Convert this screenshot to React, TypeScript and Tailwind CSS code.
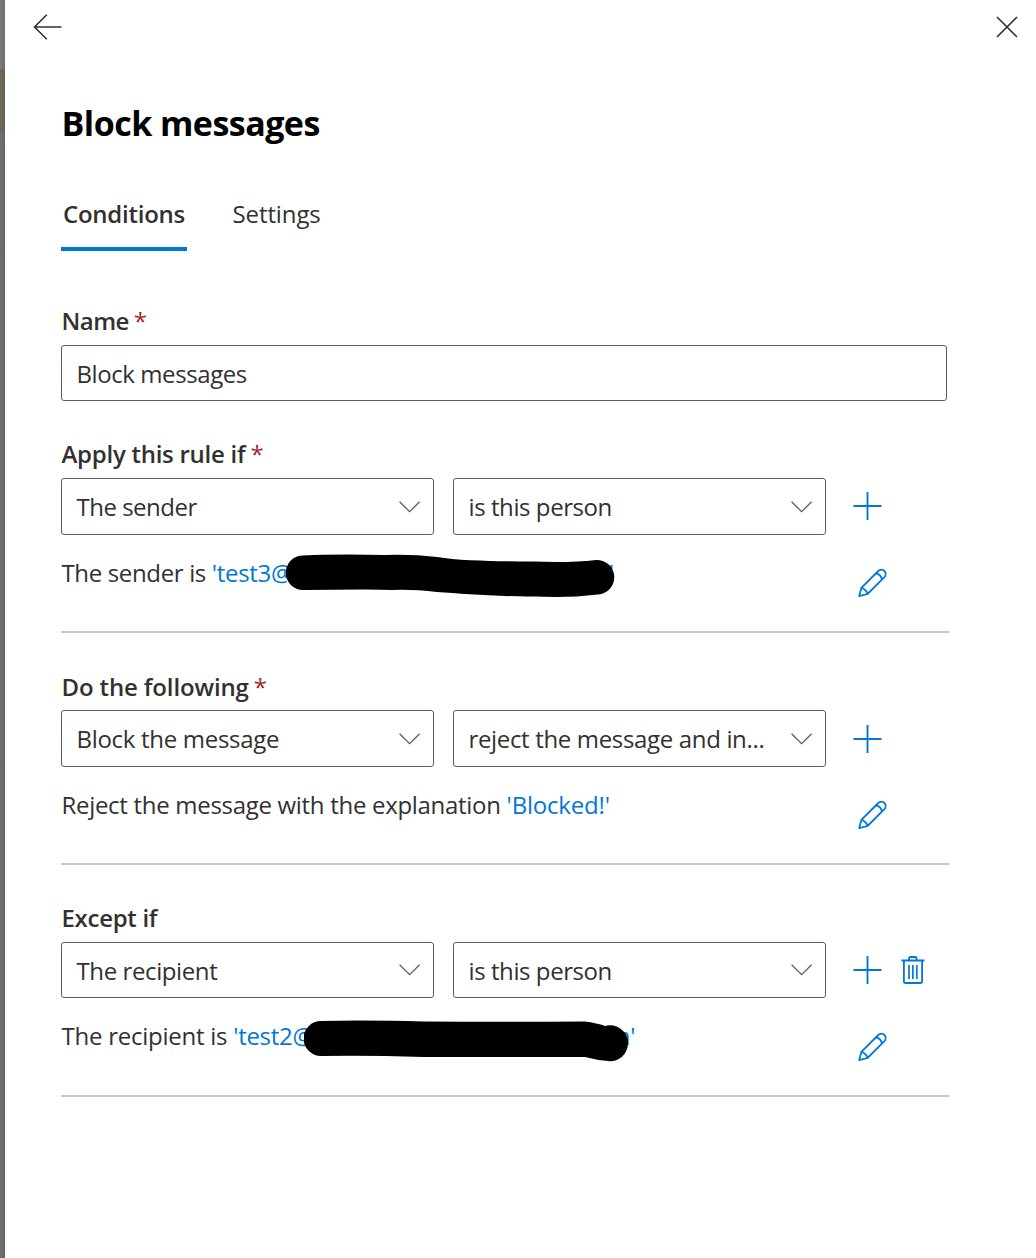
import type { ReactNode } from 'react'

interface SelectProps {
  label: string
  className: string
}

interface RuleSectionProps {
  title: string
  titleClass: string
  required?: boolean
  subject: SelectProps
  predicate: SelectProps
  removable?: boolean
  rowClass?: string
  iconsClass?: string
  summaryClass?: string
  children: ReactNode
}

function BackIcon() {
  return (
    <svg width="30" height="28" viewBox="0 0 30 28" fill="none" stroke="#323130" strokeWidth="1.6">
      <path d="M28.5 14H1.5M13.8 1.8L1.5 14L13.8 26.2" />
    </svg>
  )
}

function CloseIcon() {
  return (
    <svg width="22" height="22" viewBox="0 0 22 22" fill="none" stroke="#323130" strokeWidth="1.7">
      <path d="M1 1L21 21M21 1L1 21" />
    </svg>
  )
}

function ChevronIcon() {
  return (
    <svg className="shrink-0" width="22" height="12" viewBox="0 0 22 12" fill="none" stroke="#605e5c" strokeWidth="1.3">
      <path d="M0.6 0.8L10.6 10.6L20.6 0.8" />
    </svg>
  )
}

function PlusIcon() {
  return (
    <svg width="29" height="28" viewBox="0 0 29 28" fill="none" stroke="#0078d4" strokeWidth="1.9">
      <path d="M0.5 14H28.5M14.5 0V28" />
    </svg>
  )
}

function TrashIcon() {
  return (
    <svg width="24" height="28" viewBox="0 0 24 28" fill="none" stroke="#0078d4" strokeWidth="1.8">
      <path d="M0.5 4.5H23.5M8 4.5V2.4Q8 1 9.4 1H14.2Q15.6 1 15.6 2.4V4.5" />
      <path d="M2.9 4.5V25.2Q2.9 27 4.7 27H19.3Q21.1 27 21.1 25.2V4.5" />
      <path d="M8 9V23M11.9 9V23M15.8 9V23" strokeWidth="1.7" />
    </svg>
  )
}

function PencilIcon() {
  return (
    <svg width="30" height="30" viewBox="0 0 30 30" fill="none" stroke="#0078d4" strokeWidth="1.8" strokeLinejoin="round">
      <path d="M2.2 28.1L4.4 19.9L21.3 3A4.15 4.15 0 0 1 27.4 9.1L10.5 26Z" />
      <path d="M18.9 5.4C21.8 6 24.4 8.6 25 11.5M4.4 19.9C7.4 20.8 9.6 23 10.5 26" />
    </svg>
  )
}

function Select({ label, className }: SelectProps) {
  return (
    <div className="flex w-[373px] items-center justify-between rounded-[3px] border border-[#605e5c] pr-3 pl-[14.5px]">
      <span className={`whitespace-nowrap ${className}`}>{label}</span>
      <ChevronIcon />
    </div>
  )
}

function Required() {
  return <span className="-ml-px font-normal text-[#a4262c]">*</span>
}

function RuleSection({
  title,
  titleClass,
  required,
  subject,
  predicate,
  removable,
  rowClass = 'h-[57px]',
  iconsClass = '',
  summaryClass = 'h-24',
  children,
}: RuleSectionProps) {
  return (
    <section className="mt-[37px] w-[888px] border-b-2 border-[#c8c8c8]">
      <h2 className={`h-10 pl-[0.5px] leading-8 font-semibold ${titleClass}`}>
        {title} {required && <Required />}
      </h2>
      <div className={`flex ${rowClass}`}>
        <Select {...subject} />
        <div className="ml-[19px] flex">
          <Select {...predicate} />
        </div>
        <div className={`ml-[27px] flex items-center gap-[19px] ${iconsClass}`}>
          <PlusIcon />
          {removable && <TrashIcon />}
        </div>
      </div>
      <div className={`flex justify-between pr-[62px] pl-[0.5px] ${summaryClass}`}>
        <p className="mt-[22px] h-8 leading-8 whitespace-nowrap">{children}</p>
        <div className="mt-[33px]">
          <PencilIcon />
        </div>
      </div>
    </section>
  )
}

export default function App() {
  return (
    <div className="flex h-[1258px] w-[1036px] overflow-hidden bg-white font-['Open_Sans','Noto_Sans',sans-serif] text-[24px] text-[#323130]">
      {/* Dimmed page behind the panel */}
      <div className="flex w-[5px] flex-col">
        <div className="h-[69px] bg-linear-to-r from-[#7c7c7c] to-[#6c6c6c]" />
        <div className="h-[63px] bg-linear-to-r from-[#716b58] to-[#65614e]" />
        <div className="flex-1 bg-linear-to-r from-[#707070] to-[#646464]" />
      </div>

      <main className="flex-1 pl-14">
        <header className="-ml-7 flex h-[54px] items-center justify-between pr-[18px]">
          <BackIcon />
          <CloseIcon />
        </header>

        <h1 className="mt-[45px] h-12 pl-[0.5px] text-[34px] leading-[48px] font-bold tracking-[-0.53px] text-black">Block messages</h1>

        <nav className="mt-[34px] flex h-[70px]">
          <div className="w-[126px] border-b-4 border-[#0078d4] pt-[17px] pl-[2px] leading-8 font-semibold tracking-[-0.25px]">
            Conditions
          </div>
          <div className="ml-[45.5px] pt-[17px] leading-8 tracking-[-0.1px]">Settings</div>
        </nav>

        <div className="mt-[54px]">
          <label className="block h-10 pl-[0.5px] leading-8 font-semibold tracking-[-0.5px]">
            Name <Required />
          </label>
          <div className="flex h-14 w-[886px] items-center rounded-[3px] border border-[#605e5c] pt-0.5 pl-[14.5px] tracking-[-0.42px]">
            Block messages
          </div>
        </div>

        <RuleSection
          title="Apply this rule if"
          titleClass="tracking-[-0.26px]"
          required
          subject={{ label: 'The sender', className: 'tracking-[-0.5px]' }}
          predicate={{ label: 'is this person', className: 'tracking-[-0.42px]' }}
          iconsClass="pb-0.5"
        >
          <span className="tracking-[-0.35px]">The sender is </span>
          <span className="relative inline-block w-[402px] tracking-[-0.3px] text-[#0078d4]">
            'test3@
            <span className="absolute right-0">'</span>
            {/* Redacted domain */}
            <svg className="absolute top-[-3px] left-[74.5px]" width="330" height="46" viewBox="0 0 330 46">
              <path d="M17 1.5Q50 0 98 1Q126 0 151 3C180 8 230 7 270 8Q292 8 310 6A17 17 0 0 1 312 40.500Q290 43 270 43C220 43 180 40 151 38Q126 35 106 36Q90 35 17 36A17 17 0 0 1 17 1.500Z" />
            </svg>
          </span>
        </RuleSection>

        <RuleSection
          title="Do the following"
          titleClass="pt-px tracking-[-0.14px]"
          required
          subject={{ label: 'Block the message', className: 'tracking-[-0.3px]' }}
          predicate={{ label: 'reject the message and in...', className: 'tracking-[-0.34px]' }}
        >
          <span className="tracking-[-0.3px]">Reject the message with the explanation </span>
          <span className="tracking-[-0.2px] text-[#0078d4]">'Blocked!'</span>
        </RuleSection>

        <RuleSection
          title="Except if"
          titleClass="tracking-[-0.3px]"
          subject={{ label: 'The recipient', className: 'pt-0.5 tracking-[-0.4px]' }}
          predicate={{ label: 'is this person', className: 'pt-0.5 tracking-[-0.42px]' }}
          removable
          rowClass="h-14"
          summaryClass="h-[97px] [&>div]:pt-px"
        >
          <span className="tracking-[-0.25px]">The recipient is </span>
          <span className="relative inline-block w-[402px] tracking-[-0.3px] text-[#0078d4]">
            'test2@
            <span className="absolute right-0">n'</span>
            <svg className="absolute top-0 left-[70.5px]" width="326" height="42" viewBox="0 0 326 42">
              <path d="M17 1Q60 0 120 1.500Q200 2 281 1.500Q293 3 301 6A18 17.500 0 0 1 324 23A17.500 18 0 0 1 304 41Q292 40 281 37Q200 37 120 37Q60 35 17 36A17 17 0 0 1 17 1Z" />
            </svg>
          </span>
        </RuleSection>
      </main>
    </div>
  )
}
